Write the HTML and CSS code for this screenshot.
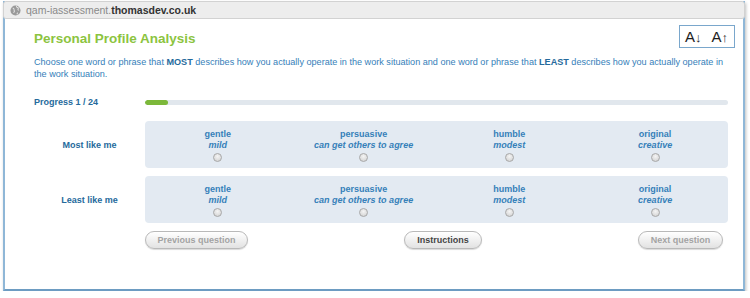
FILE: index.html
```html
<!DOCTYPE html>
<html lang="en">
<head>
    <meta charset="UTF-8">
    <title>Personal Profile Analysis</title>
    <link rel="stylesheet" href="styles.css">
</head>
<body>
    <div class="window">
        <!-- Address bar -->
        <div class="address-bar">
            <svg class="globe" width="11" height="11" viewBox="0 0 12 12">
                <circle cx="6" cy="6" r="5.5" fill="#9a9a9a"/>
                <path d="M3 3.2c1 .3 1.6 1 1.4 1.9-.2.7.6 1 .4 1.8-.2.6-.8.9-.6 1.8M7.2 1.2c-.4.8.2 1.4 1 1.5.9.2 1.1 1.1.6 1.7-.4.5.1 1.2.8 1.3M8.5 8.5c-.6.3-.9 1-.6 1.7" stroke="#e6e6e6" stroke-width="1.1" fill="none"/>
            </svg>
            <span class="url">qam-iassessment.<b>thomasdev.co.uk</b></span>
        </div>

        <div class="content">
            <!-- Header -->
            <div class="page-header">
                <h1>Personal Profile Analysis</h1>
                <div class="font-size">
                    <button class="size-btn">A<span>↓</span></button>
                    <button class="size-btn">A<span>↑</span></button>
                </div>
            </div>

            <p class="intro">Choose one word or phrase that <b>MOST</b> describes how you actually operate in the work situation and one word or phrase that <b>LEAST</b> describes how you actually operate in the work situation.</p>

            <!-- Progress -->
            <div class="row progress-row">
                <div class="row-label left">Progress 1 / 24</div>
                <div class="progress-track">
                    <div class="progress-fill" style="width: 4%"></div>
                </div>
            </div>

            <!-- Answers -->
            <div class="row answer-row">
                <div class="row-label">Most like me</div>
                <div class="options">
                    <label class="option"><span class="word">gentle</span><i>mild</i><input type="radio" name="most"></label>
                    <label class="option"><span class="word">persuasive</span><i>can get others to agree</i><input type="radio" name="most"></label>
                    <label class="option"><span class="word">humble</span><i>modest</i><input type="radio" name="most"></label>
                    <label class="option"><span class="word">original</span><i>creative</i><input type="radio" name="most"></label>
                </div>
            </div>

            <div class="row answer-row">
                <div class="row-label">Least like me</div>
                <div class="options">
                    <label class="option"><span class="word">gentle</span><i>mild</i><input type="radio" name="least"></label>
                    <label class="option"><span class="word">persuasive</span><i>can get others to agree</i><input type="radio" name="least"></label>
                    <label class="option"><span class="word">humble</span><i>modest</i><input type="radio" name="least"></label>
                    <label class="option"><span class="word">original</span><i>creative</i><input type="radio" name="least"></label>
                </div>
            </div>

            <!-- Navigation -->
            <div class="row">
                <div></div>
                <div class="actions">
                    <button class="pill prev" disabled>Previous question</button>
                    <button class="pill instructions">Instructions</button>
                    <button class="pill next" disabled>Next question</button>
                </div>
            </div>
        </div>
    </div>
</body>
</html>
```

FILE: styles.css
```css
:root {
    --blue-text: #3580b9;
    --blue-dark: #256a9c;
    --green: #8cc43f;
    --panel-bg: #e3eaf2;
    --frame: #8fb7d7;
}

body {
    margin: 0;
    background: #fff;
    font-family: "Liberation Sans", Arial, sans-serif;
}

.window {
    margin: 1px 5px 0 3px;
    height: 290px;
    box-sizing: border-box;
    border: 2px solid var(--frame);
    border-top: none;
    border-bottom-color: #6d9cc2;
    box-shadow: 1px 2px 3px rgba(0, 0, 0, 0.25);
}

.address-bar {
    display: flex;
    align-items: center;
    gap: 5px;
    height: 16px;
    margin: 0 -2px;
    padding-left: 6px;
    background: #ededed;
    border: 1px solid #d2d2d2;
    border-radius: 3px;
}

.url {
    font-size: 10.5px;
    color: #8a8a8a;
}

.url b {
    color: #333;
    font-weight: bold;
}

.content {
    padding: 6px 15px 0 29px;
}

.page-header {
    display: flex;
    justify-content: space-between;
    align-items: flex-start;
}

.page-header h1 {
    margin: 6px 0 0;
    font-size: 13.5px;
    font-weight: bold;
    color: var(--green);
}

.font-size {
    display: flex;
    gap: 10px;
    margin-right: -7px;
    padding: 2px 6px 2px 5px;
    border: 1px solid #7aa7cc;
    background: #fff;
}

.size-btn {
    display: flex;
    align-items: flex-end;
    padding: 0;
    border: none;
    background: none;
    font-family: inherit;
    font-size: 15px;
    color: #1d1d1d;
    line-height: 17px;
    cursor: pointer;
}

.size-btn span {
    font-size: 13px;
    line-height: 15px;
}

.intro {
    margin: 8px 0 0;
    font-size: 9.1px;
    line-height: 12px;
    color: var(--blue-text);
}

.intro b {
    color: var(--blue-dark);
}

.row {
    display: grid;
    grid-template-columns: 111px 1fr;
    align-items: center;
}

.row-label {
    font-size: 9px;
    font-weight: bold;
    color: var(--blue-dark);
    text-align: center;
}

.row-label.left {
    text-align: left;
}

.progress-row {
    margin: 17px 0 14px;
}

.progress-track {
    height: 5px;
    border-radius: 3px;
    background: #e1e7ed;
    overflow: hidden;
}

.progress-fill {
    height: 100%;
    border-radius: 3px;
    background: #7cb83a;
}

.answer-row {
    margin-bottom: 8px;
}

.options {
    display: grid;
    grid-template-columns: repeat(4, 1fr);
    height: 47px;
    box-sizing: border-box;
    padding-top: 8px;
    border-radius: 4px;
    background: var(--panel-bg);
}

.option {
    display: flex;
    flex-direction: column;
    align-items: center;
    font-size: 9px;
    font-weight: bold;
    line-height: 11px;
    color: var(--blue-text);
}

.option i {
    font-weight: bold;
}

.option input {
    appearance: none;
    width: 9px;
    height: 9px;
    margin: 2px 0 0;
    border: 1px solid #a8a8a8;
    border-radius: 50%;
    background: radial-gradient(circle at 50% 35%, #f4f4f4, #cfcfcf);
}

.actions {
    display: flex;
    justify-content: space-between;
    padding-right: 5px;
}

.pill {
    height: 18px;
    padding: 0;
    white-space: nowrap;
    border: 1px solid #b9b9b9;
    border-radius: 9px;
    background: linear-gradient(#ffffff, #e2e2e2);
    box-shadow: 0 1px 1px rgba(0, 0, 0, 0.15);
    font-family: inherit;
    font-size: 9px;
    font-weight: bold;
    color: #444;
}

.pill:disabled {
    color: #a3a3a3;
}

.prev {
    width: 103px;
}

.instructions {
    width: 78px;
}

.next {
    width: 85px;
}
```
